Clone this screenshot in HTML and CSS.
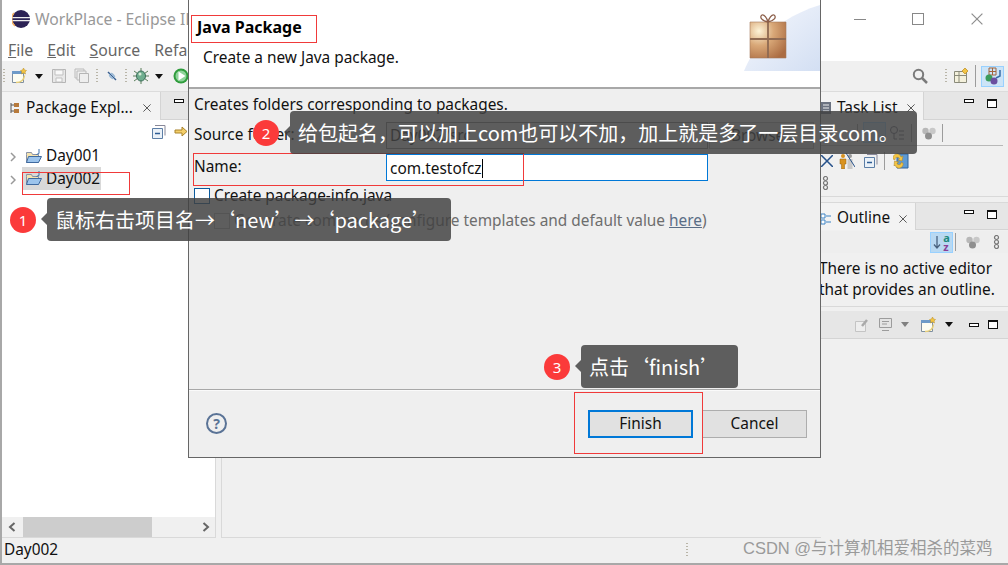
FILE: index.html
```html
<!DOCTYPE html>
<html lang="en">
<head>
<meta charset="utf-8">
<title>Java Package</title>
<link rel="stylesheet" href="styles.css">
</head>
<body>
<svg class="defs" width="0" height="0">
  <symbol id="close" viewBox="0 0 10 10"><path d="M.5.5l9 9M9.5.5l-9 9" stroke="#333" fill="none"/></symbol>
  <symbol id="wizard" viewBox="0 0 16 16"><path d="M1.500 3.500h11v11h-11z" fill="#fdfdf2" stroke="#7f8fa0"/><path d="M1 3h12v3H1z" fill="#6f9bc8"/><path d="M5 14.500c5 0 8-3 8.500-7" stroke="#e8cf7a" stroke-width="1.500" fill="none"/><path d="M12.500 0l1 2 2 .5-1.500 1.500.5 2-2-1-2 1 .5-2L9.500 2.500l2-.5z" fill="#f3c544" stroke="#b98a20" stroke-width=".5"/></symbol>
  <symbol id="save" viewBox="0 0 16 16"><path d="M1.500 1.500h13v13h-13z" fill="#e8e8e8" stroke="#b5b5b5"/><path d="M4 2h8v5H4zM5 10h6v4H5z" fill="#f8f8f8" stroke="#c0c0c0"/></symbol>
  <symbol id="folder" viewBox="0 0 17 16"><path d="M1.500 5.500V3.500h5l1 2h6v8h-12z" fill="#f4e3b0" stroke="#8a93a6"/><path d="M3.500 7.500h13l-3 6h-12z" fill="#9cc4ec" stroke="#3f6aa0"/><path d="M14 0v4.500l-2.500 1" stroke="#3a6ea8" fill="none"/></symbol>
  <symbol id="chain" viewBox="0 0 7 14"><circle cx="3.500" cy="2.500" r="2" fill="none" stroke="#777" stroke-width="1.200"/><circle cx="3.500" cy="7" r="2" fill="none" stroke="#777" stroke-width="1.200"/><circle cx="3.500" cy="11.500" r="2" fill="none" stroke="#777" stroke-width="1.200"/></symbol>
  <symbol id="balls" viewBox="0 0 14 14"><circle cx="3.500" cy="5" r="3.200" fill="#b8b8b8"/><circle cx="10.500" cy="5" r="3.200" fill="#c8c8c8"/><circle cx="6.500" cy="10" r="3.500" fill="#8f8f8f"/></symbol>
</svg>

<div class="win">
  <header class="title">
    <svg class="logo" viewBox="0 0 18 18"><circle cx="9" cy="9" r="9" fill="#2c2255"/><path d="M0 7h18v1.200H0zM0 10h18v1.200H0z" fill="#eee"/><path d="M2 3A9 9 0 0 0 3 16" stroke="#f5b062" stroke-width="1.500" fill="none"/></svg>
    <span>WorkPlace - Eclipse IDE</span>
    <div class="winctl">
      <i class="wmin"></i><i class="wmax"></i>
      <svg class="wclose"><use href="#close"/></svg>
    </div>
  </header>
  <nav class="menu">
    <span><u>F</u>ile</span><span><u>E</u>dit</span><span><u>S</u>ource</span><span>Refactor</span>
  </nav>
  <div class="toolbar">
    <i class="grip"></i>
    <svg class="ic16 wiz"><use href="#wizard"/></svg><i class="dd"></i>
    <svg class="ic16 sv"><use href="#save"/></svg>
    <svg class="ic16 sv2" viewBox="0 0 16 16"><path d="M1 1h9v9H1z" fill="#eee" stroke="#bbb"/><path d="M3 3h9v9H3z" fill="#eee" stroke="#bbb"/><path d="M5.500 5.500h9v9h-9z" fill="#eee" stroke="#b5b5b5"/></svg>
    <i class="grip g2"></i>
    <svg class="ic12" viewBox="0 0 12 12"><path d="M2 2l8 8" stroke="#3a5f8f" stroke-width="1.500"/><ellipse cx="6" cy="6" rx="3.500" ry="2.500" fill="#9bb8d4" transform="rotate(45 6 6)"/><path d="M2 2l8 8" stroke="#3a5f8f"/></svg>
    <i class="grip g3"></i>
    <svg class="ic16 bug" viewBox="0 0 16 16"><path d="M1 3l14 10M15 3L1 13M8 0v16M0 8h16" stroke="#5a7f5a"/><ellipse cx="8" cy="8" rx="4.500" ry="5" fill="#6fae8f" stroke="#3c6e5a"/><circle cx="7" cy="6" r="1.500" fill="#d8ecd8"/></svg><i class="dd d2"></i>
    <svg class="ic16 run" viewBox="0 0 16 16"><circle cx="8" cy="8" r="7.500" fill="#2f9c3c"/><circle cx="8" cy="8" r="5.500" fill="#8fd39a"/><path d="M5.500 3.500l7 4.500-7 4.500z" fill="#fff"/></svg>
    <div class="tb-right">
      <svg class="ic16" viewBox="0 0 16 16"><circle cx="6.500" cy="6.500" r="4.700" fill="none" stroke="#7a7a7a" stroke-width="2"/><path d="M10 10l5 5" stroke="#7a7a7a" stroke-width="2.500"/></svg>
      <i class="grip g4"></i>
      <svg class="ic16 persp" viewBox="0 0 16 16"><path d="M1.500 3.500h12v11h-12z" fill="#f4f1dc" stroke="#8a8a7a"/><path d="M1.500 7.500h12M6 3.500v11" stroke="#8a8a7a"/><path d="M12 0l3 3-3 3-3-3z" fill="#f3c544" stroke="#b98a20" stroke-width=".7"/></svg>
      <i class="vsep"></i>
      <span class="pbtn"><svg class="ic18" viewBox="0 0 18 18"><path d="M5 1h7v7H5zM8.500 1v7M5 4.500h7" fill="none" stroke="#a2653c"/><circle cx="5" cy="11" r="3.500" fill="#3b9c5c"/><circle cx="10" cy="14" r="3.500" fill="#6a4fa0"/><path d="M16 3v6l-4 2" stroke="#3a6ea8" stroke-width="1.500" fill="none"/></svg></span>
    </div>
  </div>

  <main class="main">
    <section class="left">
      <div class="tabs">
        <div class="tab pe-tab">
          <svg class="ic11" viewBox="0 0 10 12"><path d="M1 1v10M1 3h3M1 9h3" stroke="#555" fill="none"/><path d="M4 1h5v4H4zM4 7h5v4H4z" fill="#b77a3c"/></svg>
          <span>Package Expl...</span>
          <svg class="x"><use href="#close"/></svg>
        </div>
        <div class="tabfill"><i class="min"></i></div>
      </div>
      <div class="pe-tools">
        <svg class="ic13" viewBox="0 0 14 14"><path d="M3 .5h10v10" fill="none" stroke="#889"/><path d="M.5 3.500h10v10H.5z" fill="#eaf1f8" stroke="#5c7ea6"/><path d="M3 8.500h5" stroke="#2d5c94" stroke-width="1.500"/></svg>
        <svg class="ic14 sync" viewBox="0 0 14 14"><path d="M1 5h7V2l5 4.500L8 11V8H1z" fill="#f4cf6a" stroke="#a9832a"/></svg>
      </div>
      <div class="tree">
        <div class="row">
          <svg class="chev" viewBox="0 0 6 10"><path d="M1 1l4 4-4 4" fill="none" stroke="#999" stroke-width="1.500"/></svg>
          <svg class="fold"><use href="#folder"/></svg>
          <span>Day001</span>
        </div>
        <div class="row">
          <svg class="chev" viewBox="0 0 6 10"><path d="M1 1l4 4-4 4" fill="none" stroke="#999" stroke-width="1.500"/></svg>
          <span class="sel"><svg class="fold"><use href="#folder"/></svg><span>Day002</span></span>
        </div>
      </div>
      <div class="hscroll">
        <svg class="arrow" viewBox="0 0 8 10"><path d="M6.500 1L2 5l4.500 4" fill="none" stroke="#666" stroke-width="2"/></svg>
        <i class="thumb"></i>
        <svg class="arrow" viewBox="0 0 8 10"><path d="M1.500 1L6 5 1.500 9" fill="none" stroke="#666" stroke-width="2"/></svg>
      </div>
    </section>

    <section class="center"></section>

    <section class="right">
      <div class="tabs">
        <div class="tab tl-tab">
          <svg class="ic11" viewBox="0 0 10 12"><path d="M0 0h10v12H0z" fill="#6b7280"/><path d="M2 3h6M2 6h6M2 9h6" stroke="#eee"/></svg>
          <span>Task List</span>
          <svg class="x"><use href="#close"/></svg>
        </div>
        <div class="tabfill"><i class="min"></i><i class="max"></i></div>
      </div>
      <div class="tl-row1">
        <i class="vsep"></i>
        <span class="tl-btn"></span>
        <svg class="ic14 filt" viewBox="0 0 14 14"><circle cx="4" cy="4" r="3.500" fill="none" stroke="#667"/><path d="M9 5h5M9 9h5M9 13h5M4 7v6h3" stroke="#667" fill="none"/></svg>
        <i class="vsep v2"></i>
        <svg class="ic14 bl" viewBox="0 0 14 14"><use href="#balls"/></svg>
        <i class="vsep v3"></i>
      </div>
      <div class="tl-row2">
        <svg class="xx" viewBox="0 0 10 10"><path d="M0 0l10 10M10 0L0 10" stroke="#27528a" stroke-width="1.300"/></svg>
        <svg class="ic16 pers" viewBox="0 0 16 16"><circle cx="4" cy="3" r="2" fill="#d99320"/><path d="M1 6h6v5H5.500v5h-3v-5H1z" fill="#d99320" stroke="#95600f" stroke-width=".5"/><circle cx="11" cy="3" r="2" fill="#9a9a9a"/><path d="M8.500 6h5v10h-5z" fill="#c9c9c9"/><path d="M7 0l9 14" stroke="#27528a"/></svg>
        <svg class="ic13 coll" viewBox="0 0 14 14"><path d="M3 .5h10v10" fill="none" stroke="#889"/><path d="M.5 3.500h10v10H.5z" fill="#eaf1f8" stroke="#5c7ea6"/><path d="M3 8.500h5" stroke="#2d5c94" stroke-width="1.500"/></svg>
        <i class="vsep"></i>
        <svg class="ic16 syn" viewBox="0 0 16 16"><path d="M4 1h11v14H4z" fill="#5f9ad2" stroke="#2f639c"/><path d="M0 6a4 4 0 0 1 8-2l2-1-1 5-4-1 1.500-1A2 2 0 0 0 2 7zM10 10a4 4 0 0 1-8 2l-1 1 .5-5 4.500 1-2 1a2 2 0 0 0 4-.5z" fill="#f3c544" stroke="#a9832a" stroke-width=".5"/></svg>
      </div>
      <div class="tl-row3"><svg class="chain"><use href="#chain"/></svg></div>
      <div class="tabs ol-tabs">
        <div class="tab ol-tab">
          <svg class="ic11" viewBox="0 0 10 12"><path d="M0 1h4v4H0zM0 7h4v4H0z" fill="#fff" stroke="#3b82c4"/><path d="M5 3h5M5 9h5" stroke="#3b82c4"/></svg>
          <span>Outline</span>
          <svg class="x"><use href="#close"/></svg>
        </div>
        <div class="tabfill"><i class="min"></i><i class="max"></i></div>
      </div>
      <div class="ol-tools">
        <span class="azbtn">
          <svg class="azarrow" viewBox="0 0 8 14"><path d="M4 1v12M1 9.500L4 13l3-3.500" fill="none" stroke="#48627f" stroke-width="1.300"/></svg>
          <span class="azl"><b class="az-a">a</b><b class="az-z">z</b></span>
        </span>
        <i class="vsep"></i>
        <svg class="ic14 bl2" viewBox="0 0 14 14"><use href="#balls"/></svg>
        <svg class="chain ch2"><use href="#chain"/></svg>
      </div>
      <p class="ol-msg">There is no active editor<br>that provides an outline.</p>
      <div class="bottom-tools">
        <svg class="ic14 b1" viewBox="0 0 14 14"><path d="M.5 3.500h10v10H.5z" fill="#eee" stroke="#c4c4c4"/><path d="M7 8l5-6" stroke="#aaa" stroke-width="2.500"/></svg>
        <svg class="ic14 b2" viewBox="0 0 14 14"><path d="M.5.5h12v9H.5z" fill="#e4e4e4" stroke="#9c9c9c"/><path d="M3 3.500h7M3 6h5M3 12.500h7" stroke="#9c9c9c"/></svg>
        <i class="dd gray"></i>
        <svg class="ic16 b3"><use href="#wizard"/></svg>
        <i class="dd d3"></i>
        <i class="min"></i><i class="max"></i>
      </div>
    </section>
  </main>

  <footer class="status">
    <span>Day002</span>
    <i class="grip g5"></i>
  </footer>
</div>

<div class="dialog">
  <div class="dlg-head">
    <div>
      <h1>Java Package</h1>
      <p>Create a new Java package.</p>
    </div>
    <svg class="banner" viewBox="0 0 76 66">
      <defs>
        <linearGradient id="bn" x1="0" y1="0" x2="1" y2="1"><stop offset="0" stop-color="#f6f8fd"/><stop offset="1" stop-color="#d3dff3"/></linearGradient>
        <radialGradient id="gf" cx=".25" cy=".25" r=".9"><stop offset="0" stop-color="#fdf4d8"/><stop offset=".45" stop-color="#d9a878"/><stop offset="1" stop-color="#ab6c42"/></radialGradient>
      </defs>
      <path d="M0 66C10 42 30 14 76 0v66z" fill="url(#bn)"/>
      <path d="M6 17h36v36H6z" fill="url(#gf)" stroke="#a67a5c" stroke-width=".6"/>
      <path d="M24 17v36M6 34h36" stroke="#8f6a52" stroke-width="1.800"/>
      <path d="M24 17c-6-1-9-5-6-7 2-1 5 3 6 7 1-4 4-8 6-7 3 2 0 6-6 7z" fill="none" stroke="#8c5f4a" stroke-width="1.300"/>
    </svg>
  </div>
  <div class="dlg-body">
    <div class="intro">Creates folders corresponding to packages.</div>
    <div class="field src">
      <label>Source folder:</label>
      <span class="input">Day002/src</span>
      <span class="browse">Browse...</span>
    </div>
    <div class="field nm">
      <label>Name:</label>
      <span class="input active"><span class="caret">com.testofcz</span></span>
    </div>
    <div class="check"><i class="box on"></i><span>Create package-info.java</span></div>
    <div class="check off"><i class="box"></i><span>Generate comments (configure templates and default value <u>here</u>)</span></div>
  </div>
  <div class="dlg-foot">
    <span class="help">?</span>
    <button class="btn primary">Finish</button>
    <button class="btn">Cancel</button>
  </div>
</div>

<i class="mark m-day"></i>
<i class="mark m-title"></i>
<i class="mark m-name"></i>
<i class="mark m-finish"></i>

<div class="step s1"><b>1</b><div class="tip">鼠标右击项目名→‘new’→‘package’</div></div>
<div class="step s2"><b>2</b><div class="tip">给包起名，可以加上com也可以不加，加上就是多了一层目录com。</div></div>
<div class="step s3"><b>3</b><div class="tip">点击‘finish’</div></div>

<div class="wm">CSDN @与计算机相爱相杀的菜鸡</div>
</body>
</html>
```
FILE: styles.css
```css
* { box-sizing: border-box; }
html, body { margin: 0; width: 1008px; height: 565px; overflow: hidden; }
body { position: relative; background: #f0f0f0; color: #111; font: 15.4px/1.2 "Noto Sans", "Noto Sans CJK SC", sans-serif; }
.defs { position: absolute; }
i { display: block; flex: none; }
svg { display: block; flex: none; overflow: hidden; }
p, h1 { margin: 0; }

.ic11 { width: 10px; height: 12px; }
.ic12 { width: 12px; height: 12px; }
.ic13 { width: 14px; height: 14px; }
.ic14 { width: 14px; height: 14px; }
.ic16 { width: 16px; height: 16px; }
.ic18 { width: 18px; height: 18px; }

.win { height: 565px; display: flex; flex-direction: column; border-left: 2px solid #a8a8a8; border-bottom: 2px solid #a8a8a8; }
.title { height: 31px; background: #fff; display: flex; align-items: center; padding: 7px 0 0 10px; color: #999; font-size: 15.7px; }
.logo { width: 18px; height: 18px; margin-right: 5px; }
.winctl { margin-left: auto; display: flex; align-items: center; height: 24px; }
.wmin { width: 12px; height: 1px; background: #888; margin-right: 46px; }
.wmax { width: 12px; height: 12px; border: 1px solid #888; margin-right: 47px; }
.wclose { width: 12px; height: 12px; margin-right: 25px; opacity: .55; }
.menu { height: 30px; background: #fff; display: flex; align-items: center; padding: 9px 0 0 6px; gap: 14px; color: #666; font-size: 15.8px; }

.toolbar { height: 31px; background: #f0f0f0; border-bottom: 1px solid #dcdcdc; display: flex; align-items: center; padding-left: 1px; }
.grip { width: 2px; height: 15px; background-image: linear-gradient(#b9b5a8 50%, transparent 50%); background-size: 2px 3px; }
.wiz { margin-left: 6px; }
.dd { width: 0; height: 0; border: 4.500px solid transparent; border-top: 5px solid #111; border-bottom: 0; margin-left: 8px; }
.dd.gray { border-top-color: #808080; }
.sv { margin-left: 8px; }
.sv2 { margin-left: 7px; }
.g2 { margin-left: 6px; }
.toolbar .ic12 { margin-left: 8px; }
.g3 { margin-left: 7px; }
.bug { margin-left: 6px; }
.d2 { margin-left: 6px; }
.run { margin-left: 10px; }
.tb-right { margin-left: auto; display: flex; align-items: center; padding-right: 4px; }
.g4 { margin-left: 17px; }
.persp { margin-left: 6px; }
.toolbar .vsep { margin: 0 5px 0 6px; height: 22px; }
.pbtn { width: 23px; height: 21px; background: #cce4f7; border: 1px solid #99d1ff; display: flex; align-items: center; justify-content: center; }
.vsep { width: 1px; height: 24px; background: #9c9c9c; }

.main { flex: 1; display: flex; min-height: 0; }
.left { width: 215px; display: flex; flex-direction: column; background: #fff; border-right: 1px solid #d9d9d9; border-bottom: 1px solid #d9d9d9; }
.tabs { height: 28px; display: flex; flex: none; }
.tab { display: flex; align-items: center; background: #f3f3f3; padding-top: 4px; }
.tabfill { flex: 1; background: #e6e6e6; border-bottom: 1px solid #d4d4d4; border-left: 1px solid #d4d4d4; display: flex; align-items: flex-start; padding-top: 7px; }
.x { width: 8px; height: 8px; margin-left: 11px; }
.min { width: 10px; height: 4px; border: 1px solid #111; background: #fff; }
.max { width: 10px; height: 9px; border: 1px solid #111; border-top-width: 2px; background: #fff; }
.pe-tab { width: 158px; padding-left: 8px; gap: 6px; }
.pe-tab .x { margin-left: 4px; }
.left .tabfill .min { margin-left: 13px; }
.pe-tools { height: 25px; display: flex; align-items: center; padding: 0 0 2px 150px; background: #fff; }
.sync { margin-left: 8px; }
.tree { flex: 1; padding-top: 0; }
.row { height: 23px; display: flex; align-items: center; padding-left: 8px; }
.chev { width: 6px; height: 10px; margin-right: 9px; }
.fold { width: 17px; height: 16px; margin-right: 4px; }
.sel { display: flex; align-items: center; width: 79px; height: 23px; margin: -2px 0 0 -3px; padding: 1px 0 0 3px; background: #d9d9d9; }
.hscroll { height: 20px; background: #f0f0f0; display: flex; align-items: center; padding-left: 6px; }
.arrow { width: 8px; height: 10px; }
.thumb { width: 129px; height: 20px; background: #cdcdcd; margin: 0 50px 0 7px; }

.center { width: 603px; margin-left: 5px; background: #f0f0f0; border-left: 1px solid #d9d9d9; border-bottom: 1px solid #d9d9d9; }
.right { width: 187px; flex: none; display: flex; flex-direction: column; background: #f0f0f0; }
.tl-tab { width: 102px; gap: 6px; }
.tl-tab .x { margin-left: 3px; }
.ol-tab .x { margin-left: 9px; }
.right .tabfill .min { margin-left: 40px; }
.right .tabfill .max { margin-left: 13px; }
.tl-row1 { height: 26px; border-bottom: 1px solid #b8b8b8; margin-right: 5px; display: flex; align-items: center; padding-left: 36px; }
.tl-row1 .vsep { height: 18px; }
.tl-btn { width: 23px; height: 21px; margin-left: 5px; background: #cce4f7; border: 1px solid #99d1ff; }
.filt { margin-left: 4px; }
.tl-row1 .v2 { margin-left: 7px; }
.bl { margin-left: 10px; }
.tl-row1 .v3 { margin-left: 6px; }
.tl-row2 { height: 30px; display: flex; align-items: center; }
.xx { width: 12px; height: 12px; }
.pers { margin-left: 6px; }
.coll { margin-left: 9px; }
.tl-row2 .vsep { margin-left: 6px; height: 18px; }
.syn { margin-left: 8px; }
.tl-row3 { height: 21px; border-bottom: 1px solid #d9d9d9; padding-left: 1px; }
.chain { width: 7px; height: 14px; }
.ol-tabs { margin-top: 5px; border-top: 1px solid #d9d9d9; }
.ol-tab { width: 94px; }
.ol-tab span { margin-left: 6px; }
.ol-tabs .tabfill .min { margin-left: 48px; }
.ol-tools { height: 22px; margin-top: 1px; display: flex; align-items: center; padding-left: 109px; background: #eeeeee; }
.azbtn { width: 23px; height: 21px; background: #b9d9f2; border: 1px solid #99d1ff; display: flex; align-items: center; justify-content: center; gap: 2px; }
.azarrow { width: 8px; height: 14px; }
.azl { display: flex; flex-direction: column; }
.azl b { display: block; height: 9px; line-height: 9px; font-size: 11px; }
.az-a { color: #1f8a7d; }
.az-z { color: #8a3f96; }
.ol-tools .vsep { height: 18px; margin-left: 2px; }
.bl2 { margin-left: 10px; }
.ch2 { margin-left: 13px; }
.ol-msg { height: 54px; padding-top: 5px; line-height: 21px; white-space: nowrap; margin-left: -2px; border-bottom: 1px solid #d9d9d9; }
.bottom-tools { height: 28px; margin-top: 4px; background: #e6e6e6; border-bottom: 1px solid #d4d4d4; display: flex; align-items: center; padding-left: 34px; }
.b2 { margin-left: 10px; }
.bottom-tools .dd.gray { margin-left: 8px; }
.b3 { margin-left: 11px; }
.d3 { margin-left: 9px; }
.bottom-tools .min { margin-left: 16px; }
.bottom-tools .max { margin-left: 9px; }

.status { height: 25px; display: flex; align-items: center; padding-left: 2px; }
.g5 { margin-left: 628px; }

.dialog { position: absolute; left: 188px; top: -2px; width: 633px; height: 460px; background: #efefef; border: 1px solid #666; display: flex; flex-direction: column; }
.dlg-head { height: 90px; flex: none; background: #fff; border-bottom: 2px solid #a8a8a8; display: flex; justify-content: space-between; }
.dlg-head h1 { font-size: 16px; font-weight: 700; color: #000; margin: 18px 0 0 8px; line-height: 20px; }
.dlg-head p { margin: 11px 0 0 14px; line-height: 20px; }
.banner { width: 76px; height: 66px; margin-top: 6px; }
.dlg-body { flex: 1; padding: 6px 0 0 5px; border-bottom: 1px solid #a8a8a8; }
.intro { height: 20px; line-height: 20px; }
.field { display: flex; align-items: center; }
.field label { width: 192px; flex: none; }
.src { height: 27px; margin-top: 7px; }
.nm { height: 28px; margin-top: 4px; }
.input { width: 322px; height: 27px; padding: 0 3px; line-height: 25px; background: #e9e9e9; border: 1px solid #7a7a7a; }
.input.active { background: #fff; border-color: #0078d7; }
.caret { display: inline-block; height: 19px; line-height: 19px; border-right: 1px solid #000; vertical-align: middle; }
.browse { width: 105px; height: 27px; margin-left: 1px; border: 1px solid #adadad; background: #e1e1e1; line-height: 25px; padding-left: 21px; }
.check { display: flex; align-items: center; height: 20px; gap: 4px; margin-top: 5px; }
.check + .check { margin-top: 5px; padding-left: 20px; }
.box { width: 16px; height: 16px; background: #fff; border: 1px solid #0a5a9c; }
.off { color: #6d6d6d; }
.off .box { background: #efefef; border-color: #b5b5b5; }
.off u { color: #5a6d86; }
.dlg-foot { height: 67px; flex: none; display: flex; align-items: flex-start; padding: 19px 13px 0 17px; border-top: 1px solid #fafafa; }
.help { width: 21px; height: 21px; margin-top: 3px; margin-right: 361px; border: 2px solid #5a7396; border-radius: 50%; color: #5a7396; font: 700 14px/17px "Noto Sans", sans-serif; text-align: center; }
.btn { width: 105px; height: 28px; font: inherit; color: #111; background: #e1e1e1; border: 1px solid #adadad; padding: 1px 0 0; margin-left: 9px; }
.primary { border: 2px solid #0078d7; margin-left: 0; }

.mark { position: absolute; border: 1px solid #f03a3a; }
.m-day { left: 22px; top: 172px; width: 108px; height: 23px; }
.m-title { left: 191px; top: 15px; width: 126px; height: 28px; }
.m-name { left: 193px; top: 153px; width: 331px; height: 33px; }
.m-finish { left: 574px; top: 392px; width: 129px; height: 62px; }

.step { position: absolute; display: flex; align-items: center; height: 43px; }
.step b { width: 26px; height: 26px; border-radius: 50%; background: #fb3a3a; color: #fff; font: 400 15px/26px "Noto Sans", sans-serif; text-align: center; margin-right: 11px; }
.tip { position: relative; height: 43px; padding: 0 7px 0 8px; border-radius: 4px; background: rgba(66, 66, 66, .84); color: #fff; font: 20px/43px "Noto Sans CJK SC", sans-serif; white-space: nowrap; }
.tip::before { content: ""; position: absolute; left: -6px; top: 15px; border: 6px solid transparent; border-left: 0; border-right-color: rgba(66, 66, 66, .84); }
.s1 { left: 10px; top: 198px; }
.s1 .tip { padding-right: 19px; }
.s2 { left: 253px; top: 111px; }
.s2 .tip { padding-right: 18px; }
.s3 { left: 544px; top: 345px; }
.s3 .tip { padding-right: 18px; }

.wm { position: absolute; left: 743px; top: 537px; color: #9a9a9a; font: 16.5px/22px "Liberation Sans", "Noto Sans CJK SC", sans-serif; white-space: nowrap; }
```
